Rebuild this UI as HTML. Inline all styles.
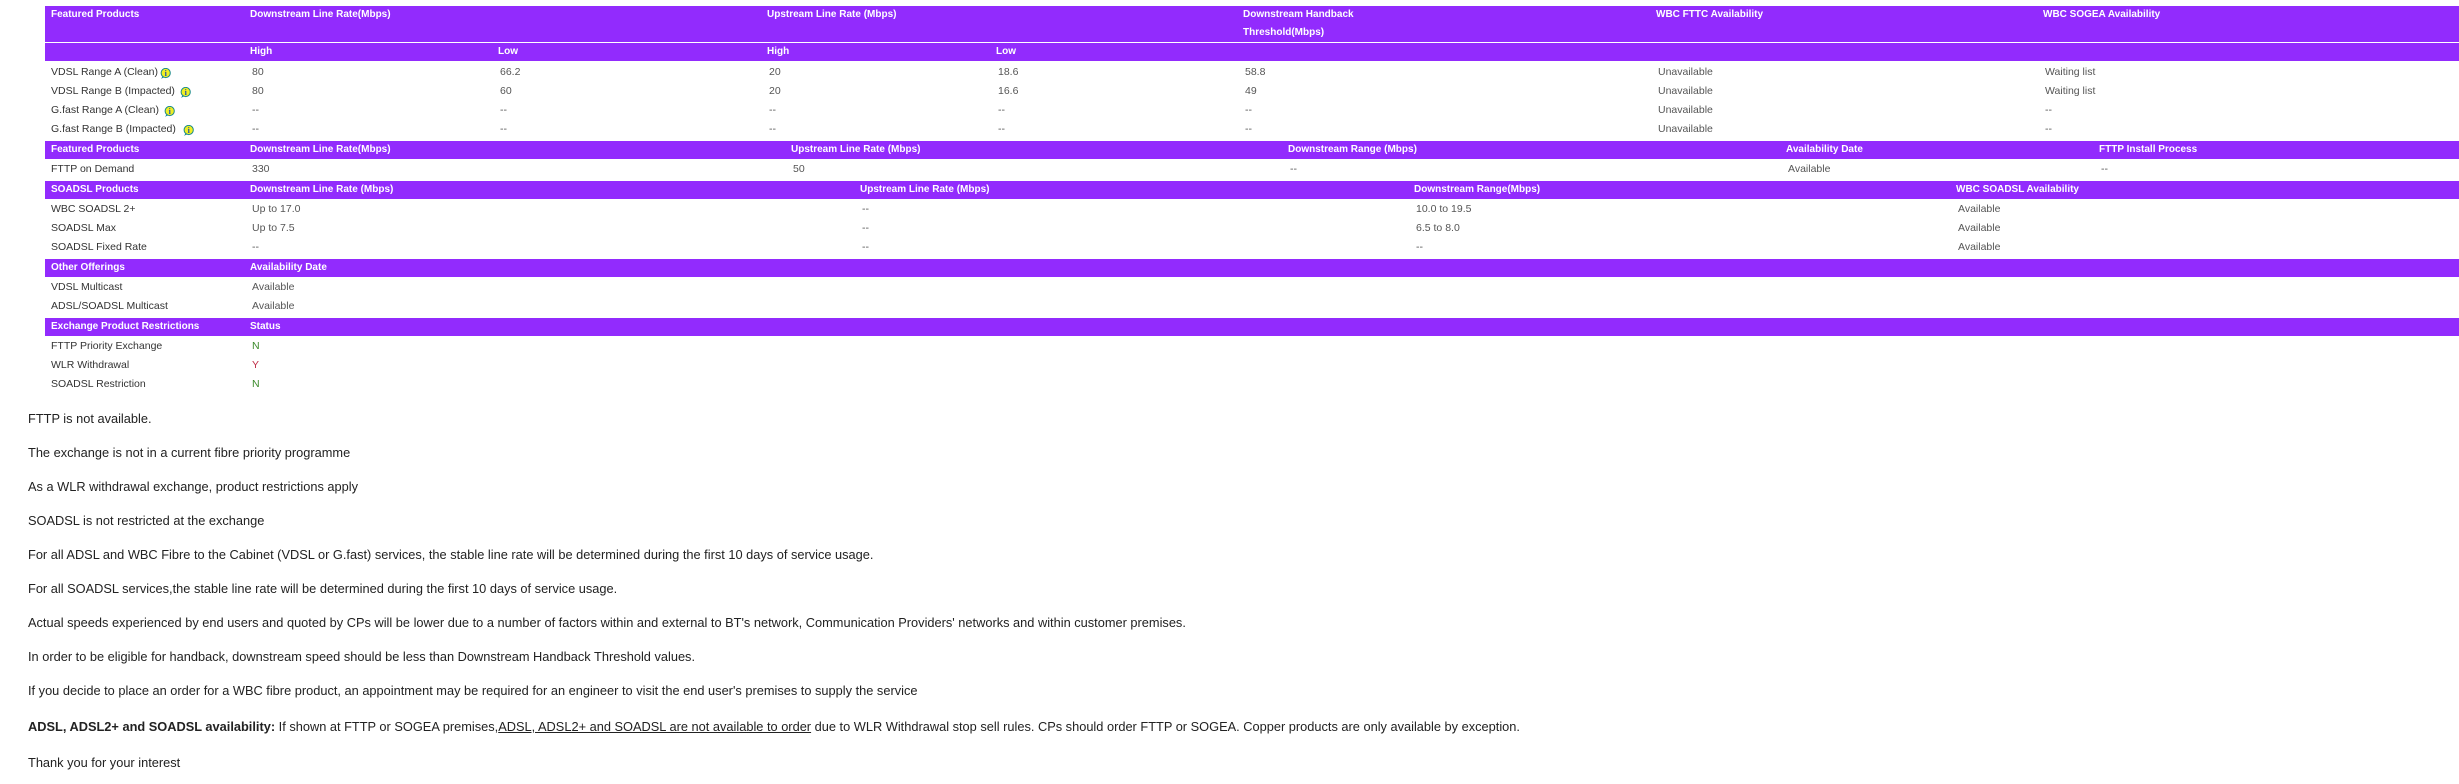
<!DOCTYPE html>
<html><head><meta charset="utf-8"><style>
*{margin:0;padding:0;box-sizing:border-box}
body{width:2459px;height:784px;background:#fff;position:relative;overflow:hidden;font-family:"Liberation Sans",Arial,sans-serif}
.bar{position:absolute;left:45px;width:2414px;background:#922bfd}
.h{position:absolute;color:#fff;font-weight:bold;font-size:10px;line-height:12px;white-space:nowrap}
.l{position:absolute;color:#333;font-size:10.5px;line-height:12px;white-space:nowrap}
.v{position:absolute;color:#555;font-size:10.5px;line-height:12px;white-space:nowrap}
.p{position:absolute;left:28px;color:#222;font-size:12.8px;line-height:14px;white-space:nowrap}
.ic{position:absolute;width:11px;height:11px}
</style></head><body>
<div class="bar" style="top:6px;height:36px"></div>
<div style="position:absolute;left:250px;top:42px;width:2209px;height:1px;background:#fff"></div>
<div class="bar" style="top:43px;height:18px"></div>
<div class="h" style="left:51px;top:9px">Featured Products</div>
<div class="h" style="left:250px;top:9px">Downstream Line Rate(Mbps)</div>
<div class="h" style="left:767px;top:9px">Upstream Line Rate (Mbps)</div>
<div class="h" style="left:1243px;top:9px">Downstream Handback</div>
<div class="h" style="left:1243px;top:27px">Threshold(Mbps)</div>
<div class="h" style="left:1656px;top:9px">WBC FTTC Availability</div>
<div class="h" style="left:2043px;top:9px">WBC SOGEA Availability</div>
<div class="h" style="left:250px;top:46px">High</div>
<div class="h" style="left:498px;top:46px">Low</div>
<div class="h" style="left:767px;top:46px">High</div>
<div class="h" style="left:996px;top:46px">Low</div>

<div class="l" style="left:51px;top:66px">VDSL Range A (Clean)</div>
<div class="l" style="left:51px;top:85px">VDSL Range B (Impacted)</div>
<div class="l" style="left:51px;top:104px">G.fast Range A (Clean)</div>
<div class="l" style="left:51px;top:123px">G.fast Range B (Impacted)</div>
<svg class="ic" style="left:160px;top:68px" viewBox="0 0 11 11"><circle cx="5.7" cy="5" r="4.6" fill="#f0ee22" stroke="#1a8a8a" stroke-width="1"/><path d="M2.5 8.5 L1 10.8 L4.5 9.3" fill="#1a8a8a"/><text x="5.7" y="8.2" font-size="8" font-weight="bold" fill="#1a4fb0" text-anchor="middle" font-family="Liberation Serif,serif">i</text></svg>
<svg class="ic" style="left:180px;top:87px" viewBox="0 0 11 11"><circle cx="5.7" cy="5" r="4.6" fill="#f0ee22" stroke="#1a8a8a" stroke-width="1"/><path d="M2.5 8.5 L1 10.8 L4.5 9.3" fill="#1a8a8a"/><text x="5.7" y="8.2" font-size="8" font-weight="bold" fill="#1a4fb0" text-anchor="middle" font-family="Liberation Serif,serif">i</text></svg>
<svg class="ic" style="left:164px;top:106px" viewBox="0 0 11 11"><circle cx="5.7" cy="5" r="4.6" fill="#f0ee22" stroke="#1a8a8a" stroke-width="1"/><path d="M2.5 8.5 L1 10.8 L4.5 9.3" fill="#1a8a8a"/><text x="5.7" y="8.2" font-size="8" font-weight="bold" fill="#1a4fb0" text-anchor="middle" font-family="Liberation Serif,serif">i</text></svg>
<svg class="ic" style="left:183px;top:125px" viewBox="0 0 11 11"><circle cx="5.7" cy="5" r="4.6" fill="#f0ee22" stroke="#1a8a8a" stroke-width="1"/><path d="M2.5 8.5 L1 10.8 L4.5 9.3" fill="#1a8a8a"/><text x="5.7" y="8.2" font-size="8" font-weight="bold" fill="#1a4fb0" text-anchor="middle" font-family="Liberation Serif,serif">i</text></svg>

<div class="v" style="left:252px;top:66px">80</div><div class="v" style="left:500px;top:66px">66.2</div><div class="v" style="left:769px;top:66px">20</div><div class="v" style="left:998px;top:66px">18.6</div><div class="v" style="left:1245px;top:66px">58.8</div><div class="v" style="left:1658px;top:66px">Unavailable</div><div class="v" style="left:2045px;top:66px">Waiting list</div>
<div class="v" style="left:252px;top:85px">80</div><div class="v" style="left:500px;top:85px">60</div><div class="v" style="left:769px;top:85px">20</div><div class="v" style="left:998px;top:85px">16.6</div><div class="v" style="left:1245px;top:85px">49</div><div class="v" style="left:1658px;top:85px">Unavailable</div><div class="v" style="left:2045px;top:85px">Waiting list</div>
<div class="v" style="left:252px;top:104px">--</div><div class="v" style="left:500px;top:104px">--</div><div class="v" style="left:769px;top:104px">--</div><div class="v" style="left:998px;top:104px">--</div><div class="v" style="left:1245px;top:104px">--</div><div class="v" style="left:1658px;top:104px">Unavailable</div><div class="v" style="left:2045px;top:104px">--</div>
<div class="v" style="left:252px;top:123px">--</div><div class="v" style="left:500px;top:123px">--</div><div class="v" style="left:769px;top:123px">--</div><div class="v" style="left:998px;top:123px">--</div><div class="v" style="left:1245px;top:123px">--</div><div class="v" style="left:1658px;top:123px">Unavailable</div><div class="v" style="left:2045px;top:123px">--</div>

<div class="bar" style="top:141px;height:18px"></div>
<div class="h" style="left:51px;top:144px">Featured Products</div>
<div class="h" style="left:250px;top:144px">Downstream Line Rate(Mbps)</div>
<div class="h" style="left:791px;top:144px">Upstream Line Rate (Mbps)</div>
<div class="h" style="left:1288px;top:144px">Downstream Range (Mbps)</div>
<div class="h" style="left:1786px;top:144px">Availability Date</div>
<div class="h" style="left:2099px;top:144px">FTTP Install Process</div>
<div class="l" style="left:51px;top:163px">FTTP on Demand</div>
<div class="v" style="left:252px;top:163px">330</div><div class="v" style="left:793px;top:163px">50</div><div class="v" style="left:1290px;top:163px">--</div><div class="v" style="left:1788px;top:163px">Available</div><div class="v" style="left:2101px;top:163px">--</div>

<div class="bar" style="top:181px;height:18px"></div>
<div class="h" style="left:51px;top:184px">SOADSL Products</div>
<div class="h" style="left:250px;top:184px">Downstream Line Rate (Mbps)</div>
<div class="h" style="left:860px;top:184px">Upstream Line Rate (Mbps)</div>
<div class="h" style="left:1414px;top:184px">Downstream Range(Mbps)</div>
<div class="h" style="left:1956px;top:184px">WBC SOADSL Availability</div>
<div class="l" style="left:51px;top:203px">WBC SOADSL 2+</div>
<div class="l" style="left:51px;top:222px">SOADSL Max</div>
<div class="l" style="left:51px;top:241px">SOADSL Fixed Rate</div>
<div class="v" style="left:252px;top:203px">Up to 17.0</div><div class="v" style="left:862px;top:203px">--</div><div class="v" style="left:1416px;top:203px">10.0 to 19.5</div><div class="v" style="left:1958px;top:203px">Available</div>
<div class="v" style="left:252px;top:222px">Up to 7.5</div><div class="v" style="left:862px;top:222px">--</div><div class="v" style="left:1416px;top:222px">6.5 to 8.0</div><div class="v" style="left:1958px;top:222px">Available</div>
<div class="v" style="left:252px;top:241px">--</div><div class="v" style="left:862px;top:241px">--</div><div class="v" style="left:1416px;top:241px">--</div><div class="v" style="left:1958px;top:241px">Available</div>

<div class="bar" style="top:259px;height:18px"></div>
<div class="h" style="left:51px;top:262px">Other Offerings</div>
<div class="h" style="left:250px;top:262px">Availability Date</div>
<div class="l" style="left:51px;top:281px">VDSL Multicast</div>
<div class="l" style="left:51px;top:300px">ADSL/SOADSL Multicast</div>
<div class="v" style="left:252px;top:281px">Available</div>
<div class="v" style="left:252px;top:300px">Available</div>

<div class="bar" style="top:318px;height:18px"></div>
<div class="h" style="left:51px;top:321px">Exchange Product Restrictions</div>
<div class="h" style="left:250px;top:321px">Status</div>
<div class="l" style="left:51px;top:340px">FTTP Priority Exchange</div>
<div class="l" style="left:51px;top:359px">WLR Withdrawal</div>
<div class="l" style="left:51px;top:378px">SOADSL Restriction</div>
<div class="v" style="left:252px;top:340px;color:#3a8a2a">N</div>
<div class="v" style="left:252px;top:359px;color:#c0304a">Y</div>
<div class="v" style="left:252px;top:378px;color:#3a8a2a">N</div>

<div class="p" style="top:412px">FTTP is not available.</div>
<div class="p" style="top:446px">The exchange is not in a current fibre priority programme</div>
<div class="p" style="top:480px">As a WLR withdrawal exchange, product restrictions apply</div>
<div class="p" style="top:514px">SOADSL is not restricted at the exchange</div>
<div class="p" style="top:548px">For all ADSL and WBC Fibre to the Cabinet (VDSL or G.fast) services, the stable line rate will be determined during the first 10 days of service usage.</div>
<div class="p" style="top:582px">For all SOADSL services,the stable line rate will be determined during the first 10 days of service usage.</div>
<div class="p" style="top:616px">Actual speeds experienced by end users and quoted by CPs will be lower due to a number of factors within and external to BT's network, Communication Providers' networks and within customer premises.</div>
<div class="p" style="top:650px">In order to be eligible for handback, downstream speed should be less than Downstream Handback Threshold values.</div>
<div class="p" style="top:684px">If you decide to place an order for a WBC fibre product, an appointment may be required for an engineer to visit the end user's premises to supply the service</div>
<div class="p" style="top:720px"><b>ADSL, ADSL2+ and SOADSL availability:</b> If shown at FTTP or SOGEA premises,<u>ADSL, ADSL2+ and SOADSL are not available to order</u> due to WLR Withdrawal stop sell rules. CPs should order FTTP or SOGEA. Copper products are only available by exception.</div>
<div class="p" style="top:756px">Thank you for your interest</div>
</body></html>
